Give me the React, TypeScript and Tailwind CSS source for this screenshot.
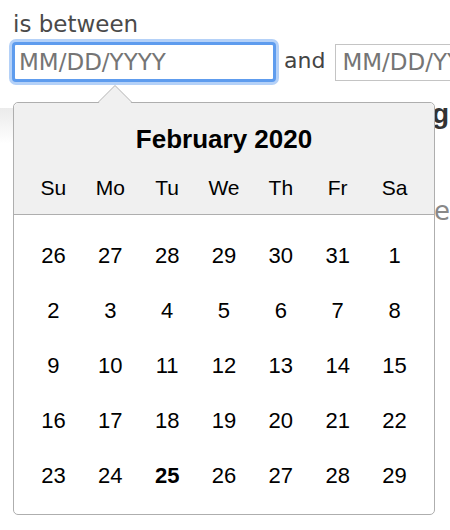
import React from 'react';

const DAY_NAMES = ['Su', 'Mo', 'Tu', 'We', 'Th', 'Fr', 'Sa'];

// semanas de fevereiro 2020, começando em 26 de janeiro
const WEEKS: number[][] = [
  [26, 27, 28, 29, 30, 31, 1],
  [2, 3, 4, 5, 6, 7, 8],
  [9, 10, 11, 12, 13, 14, 15],
  [16, 17, 18, 19, 20, 21, 22],
  [23, 24, 25, 26, 27, 28, 29],
];

export default function App() {
  return (
    <div className="relative w-[450px] h-[530px] overflow-hidden bg-white font-['DejaVu_Sans',sans-serif]">
      {/* Rótulo */}
      <p className="pl-[13px] pt-[11px] text-[23px] leading-[27px] text-[#4a4a4a]">is between</p>

      {/* Campos de data */}
      <div className="mt-[4px] flex items-center">
        <input
          readOnly
          placeholder="MM/DD/YYYY"
          className="ml-[12px] w-[264px] h-[40px] rounded-[4px] border-[3px] border-[#5e9cee] bg-white pl-[4px] text-[23px] text-[#333] outline-none shadow-[0_0_0_3px_#b4d1f8] placeholder:text-[#757575]"
        />
        <span className="ml-[8px] pb-[4px] text-[22px] leading-[27px] text-[#444]">and</span>
        <input
          readOnly
          placeholder="MM/DD/YYYY"
          className="ml-[10px] w-[200px] h-[37px] shrink-0 border border-[#c4c4c4] bg-white pl-[6px] text-[23px] text-[#333] outline-none placeholder:text-[#757575]"
        />
      </div>

      {/* Conteúdo da página por trás do calendário */}
      <div className="mt-[15px]">
        <div className="flex items-start">
          <div className="mt-[11px] h-[36px] flex-1 bg-gradient-to-b from-[#ebebeb] to-white" />
          <span className="pr-[1px] font-['Liberation_Sans',sans-serif] text-[28px] font-bold leading-[33px] text-[#333]">g</span>
        </div>
        <div className="mt-[52px] flex justify-end">
          <span className="text-[26px] leading-[30px] text-[#888]">e</span>
        </div>
      </div>

      {/* Popup do calendário */}
      <div className="absolute left-[13px] top-[102px] w-[422px] rounded-[5px] border border-[#aeaeae] bg-white font-['Liberation_Sans',Arial,sans-serif] text-black">
        <svg
          className="absolute left-[84px] top-[-18px]"
          width="34"
          height="19"
          viewBox="0 0 34 19"
        >
          <path d="M0 18.5 L17 1 L34 18.5 Z" fill="#f0f0f0" />
          <path d="M0 17.5 L17 0.5 L34 17.5" fill="none" stroke="#aeaeae" strokeWidth="1" />
        </svg>

        <div className="rounded-t-[5px] border-b border-[#aeaeae] bg-[#f0f0f0] px-[11px] pt-[21px] pb-[14px]">
          <div className="text-center text-[26px] font-bold leading-[30px]">February 2020</div>
          <div className="mt-[22px] grid grid-cols-7">
            {DAY_NAMES.map((d) => (
              <div key={d} className="text-center text-[21px] leading-[24px]">
                {d}
              </div>
            ))}
          </div>
        </div>

        <div className="px-[11px] pt-[13px] pb-[11px]">
          {WEEKS.map((week, wi) => (
            <div key={wi} className="grid h-[55px] grid-cols-7">
              {week.map((day, di) => (
                <div
                  key={di}
                  className={
                    wi === 4 && day === 25
                      ? 'text-center text-[22px] font-bold leading-[55px]'
                      : 'text-center text-[22px] leading-[55px]'
                  }
                >
                  {day}
                </div>
              ))}
            </div>
          ))}
        </div>
      </div>
    </div>
  );
}
